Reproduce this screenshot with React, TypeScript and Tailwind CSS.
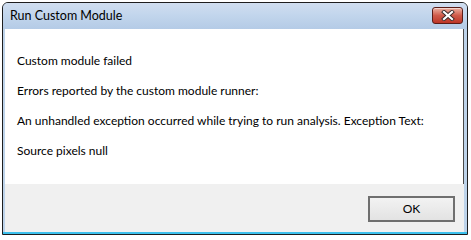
export default function App() {
  return (
    <div className="w-[471px] h-[240px] bg-white font-['Lato',sans-serif] text-[12px] text-black">
      <div className="ml-[2px] pt-[2px]">
        <div className="w-[466px] h-[233px] border border-[#1e1e1e] rounded-t-[6px] bg-[#bdd3ea] flex flex-col overflow-hidden">
          {/* title bar */}
          <div className="h-[26px] flex items-start justify-between pl-[7px] pr-[4px] bg-gradient-to-b from-[#d0def0] via-[#c1d5ec] to-[#b4cbe6]">
            <span className="mt-[5px] leading-[16px] text-[12.5px]">Run Custom Module</span>
            <button className="mt-[4px] w-[31px] h-[17px] rounded-[3px] border border-[#5a1d18] bg-gradient-to-b from-[#eab0a2] via-[#cf5a4a] to-[#bd3526] flex items-center justify-center shadow-[inset_0_1px_0_rgba(255,255,255,0.5)]">
              <svg width="14" height="11" viewBox="0 0 14 11">
                <path d="M3 2 L11 9 M11 2 L3 9" stroke="#3b2a2a" strokeWidth="4" strokeLinecap="square" />
                <path d="M3 2 L11 9 M11 2 L3 9" stroke="#ffffff" strokeWidth="2.2" strokeLinecap="square" />
              </svg>
            </button>
          </div>
          {/* client */}
          <div className="flex-1 ml-[2px] mr-[3px] flex flex-col">
            <div className="h-[155px] bg-white border-r border-[#4a4a4a] pl-[12px] pt-[24px] flex flex-col gap-[14px] leading-[16px]">
              <p>Custom module failed</p>
              <p>Errors reported by the custom module runner:</p>
              <p>An unhandled exception occurred while trying to run analysis. Exception Text:</p>
              <p>Source pixels null</p>
            </div>
            <div className="h-[48px] bg-[#f0f0f0] flex justify-end items-start pt-[12px] pr-[9px]">
              <button className="w-[87px] h-[26px] border-2 border-[#6f6f6f] bg-gradient-to-b from-[#f2f2f2] to-[#e3e3e3] flex items-center justify-center">
                OK
              </button>
            </div>
          </div>
          <div className="h-[2px] bg-[#3cc0ec]" />
        </div>
      </div>
    </div>
  );
}
